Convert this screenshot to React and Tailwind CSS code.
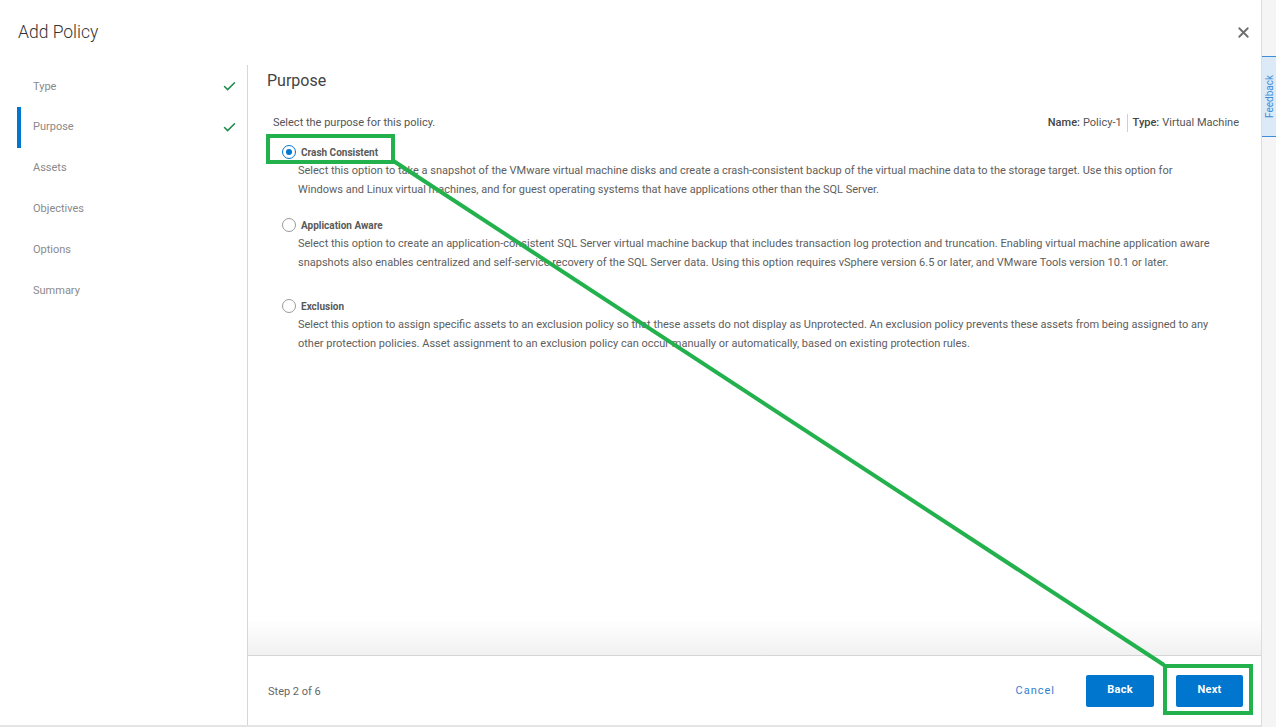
import { Check, X } from "lucide-react";

const STEPS = [
  { label: "Type", done: true },
  { label: "Purpose", done: true, active: true },
  { label: "Assets" },
  { label: "Objectives" },
  { label: "Options" },
  { label: "Summary" },
];

const OPTIONS = [
  {
    label: "Crash Consistent",
    checked: true,
    gap: "mt-[11px]",
    lines: [
      "Select this option to take a snapshot of the VMware virtual machine disks and create a crash-consistent backup of the virtual machine data to the storage target. Use this option for",
      "Windows and Linux virtual machines, and for guest operating systems that have applications other than the SQL Server.",
    ],
  },
  {
    label: "Application Aware",
    gap: "mt-[17px]",
    lines: [
      "Select this option to create an application-consistent SQL Server virtual machine backup that includes transaction log protection and truncation. Enabling virtual machine application aware",
      "snapshots also enables centralized and self-service recovery of the SQL Server data. Using this option requires vSphere version 6.5 or later, and VMware Tools version 10.1 or later.",
    ],
  },
  {
    label: "Exclusion",
    gap: "mt-[25px]",
    lines: [
      "Select this option to assign specific assets to an exclusion policy so that these assets do not display as Unprotected. An exclusion policy prevents these assets from being assigned to any",
      "other protection policies. Asset assignment to an exclusion policy can occur manually or automatically, based on existing protection rules.",
    ],
  },
];

function Radio({ checked }) {
  return (
    <span
      className={`inline-flex size-[14px] shrink-0 items-center justify-center rounded-full border bg-white ${
        checked ? "border-[#0076ce]" : "border-[#9a9a9a]"
      }`}
    >
      {checked ? <span className="size-[6px] rounded-full bg-[#0076ce]" /> : null}
    </span>
  );
}

export default function App() {
  return (
    <div className="relative flex h-[727px] w-[1276px] overflow-hidden bg-white font-['Roboto',sans-serif]">
      <div className="flex w-[1261px] flex-col border-b-2 border-[#e4e4e4]">
        <header className="flex h-[65px] shrink-0 items-center justify-between pl-[18px] pr-[9px]">
          <h1 className="text-[17.5px] font-light text-[#333]">Add Policy</h1>
          <X className="size-[17px] text-[#6e6e6e]" strokeWidth={2.6} />
        </header>

        <div className="flex min-h-0 flex-1">
          <aside className="w-[248px] shrink-0 border-r border-[#d6d6d6] pt-[1.5px]">
            {STEPS.map((step) => (
              <div key={step.label} className="relative flex h-[40.8px] items-center pl-[33px] pr-[10px]">
                {step.active ? (
                  <span className="absolute left-[17px] top-0 h-full w-[4px] bg-[#0076ce]" />
                ) : null}
                <span className="flex-1 text-[11px] text-[#8a8a8a]">{step.label}</span>
                {step.done ? <Check className="size-[15px] text-[#1f8a4c]" strokeWidth={2.4} /> : null}
              </div>
            ))}
          </aside>

          <main className="flex min-w-0 flex-1 flex-col">
            <section className="flex-1 bg-[linear-gradient(to_bottom,#fff_0,#fff_calc(100%-36px),#f1f1f1_100%)] pl-[19px] pr-[22px] pt-[6px]">
              <h2 className="text-[16px] leading-[20px] text-[#444]">Purpose</h2>

              <div className="mt-[23px] flex items-center pl-[6px] text-[11px] leading-[18px] text-[#555]">
                <span className="flex-1">Select the purpose for this policy.</span>
                <span className="font-medium text-[#444]">Name:</span>
                <span className="ml-[3px]">Policy-1</span>
                <span className="mx-[5px] h-[18px] w-px bg-[#cfcfcf]" />
                <span className="font-medium text-[#444]">Type:</span>
                <span className="ml-[3px]">Virtual Machine</span>
              </div>

              {OPTIONS.map((opt) => (
                <div key={opt.label} className={opt.gap}>
                  <div className="flex h-[18px] items-center gap-[5px] pl-[15px]">
                    <Radio checked={opt.checked} />
                    <span className="text-[10px] font-bold text-[#595959]">{opt.label}</span>
                  </div>
                  <div className="pl-[31px] text-[11px] leading-[19px] text-[#5e5e5e]">
                    {opt.lines.map((line) => (
                      <p key={line} className="whitespace-nowrap">
                        {line}
                      </p>
                    ))}
                  </div>
                </div>
              ))}
            </section>

            <footer className="flex h-[70px] shrink-0 items-center border-t border-[#d6d6d6] pl-[20px] pr-[18px]">
              <span className="flex-1 pt-[3px] text-[11px] text-[#666]">Step 2 of 6</span>
              <button type="button" className="mr-[31px] pt-[2px] text-[11px] tracking-[1px] text-[#2f7fd0]">
                Cancel
              </button>
              <button
                type="button"
                className="h-[32px] w-[68px] rounded-[2px] bg-[#0076ce] text-[11px] font-bold tracking-[0.3px] text-white"
              >
                Back
              </button>
              <button
                type="button"
                className="ml-[22px] h-[32px] w-[67px] rounded-[2px] bg-[#0076ce] text-[11px] font-bold tracking-[0.3px] text-white"
              >
                Next
              </button>
            </footer>
          </main>
        </div>
      </div>

      <div className="relative flex-1 border-l border-[#dcdcdc] bg-[#f5f5f5]">
        <div className="absolute left-0 top-[56px] flex h-[81px] w-[16px] items-center justify-center border-y border-[#3d8ddb] bg-[#dce9f6]">
          <span className="rotate-180 text-[10px] leading-[12px] text-[#3d8ddb] [writing-mode:vertical-rl]">
            Feedback
          </span>
        </div>
      </div>

      <svg
        className="pointer-events-none absolute inset-0"
        width="1276"
        height="727"
        viewBox="0 0 1276 727"
        fill="none"
      >
        <rect x="268" y="136" width="125" height="26" stroke="#22b14c" strokeWidth="4" />
        <line x1="392" y1="160" x2="1164" y2="665" stroke="#22b14c" strokeWidth="4" />
        <rect x="1165" y="666" width="86" height="47" stroke="#22b14c" strokeWidth="4" />
      </svg>
    </div>
  );
}
